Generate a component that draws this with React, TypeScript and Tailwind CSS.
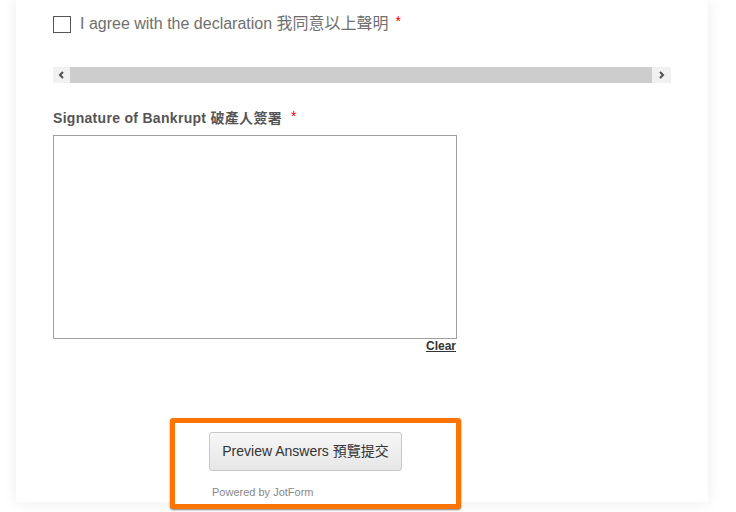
export default function App() {
  return (
    <div className="min-h-screen bg-white" style={{ fontFamily: '"Liberation Sans", Arial, "Noto Sans CJK TC", sans-serif' }}>
      <div className="mx-[16px] w-[692px] h-[502px] bg-white shadow-[0_0_14px_rgba(0,0,0,0.08)]">
        <div className="pl-[37px] pr-[38px]">
          {/* declaration checkbox */}
          <div className="flex items-center pt-[15px] h-[33px]">
            <span className="w-[18px] h-[17px] border-[1.5px] border-[#555] bg-white shrink-0" />
            <span className="ml-[9px] text-[16px] text-[#6f6f6f]">
              I agree with the declaration 我同意以上聲明
            </span>
            <span className="ml-[7px] text-[14px] text-[#e00] -mt-[6px]">*</span>
          </div>

          {/* horizontal scrollbar */}
          <div className="mt-[34px] flex h-[16px] w-[618px] bg-[#f1f1f1]">
            <div className="w-[17px] flex items-center justify-center">
              <svg width="7" height="8" viewBox="0 0 7 8">
                <path d="M5 1 L2 4 L5 7" fill="none" stroke="#505050" strokeWidth="2" />
              </svg>
            </div>
            <div className="flex-1 bg-[#cdcdcd]" />
            <div className="w-[19px] flex items-center justify-center">
              <svg width="7" height="8" viewBox="0 0 7 8">
                <path d="M2 1 L5 4 L2 7" fill="none" stroke="#505050" strokeWidth="2" />
              </svg>
            </div>
          </div>

          {/* signature */}
          <div className="mt-[25px] flex items-center text-[14px] font-bold text-[#555] tracking-[0.3px]">
            <span>Signature of Bankrupt 破產人簽署</span>
            <span className="ml-[9px] text-[#e00] font-normal -mt-[4px]">*</span>
          </div>
          <div className="mt-[6px] w-[404px] h-[204px] border border-[#a0a0a0] bg-white" />
          <div className="w-[404px] flex justify-end">
            <span className="text-[12px] leading-[12px] font-bold underline text-[#333] mr-[1px] pt-[1px]">Clear</span>
          </div>

          {/* submit area */}
          <div className="mt-[66px] ml-[117px] w-[291px] h-[91px] border-[5px] border-[#ff7300] rounded-[3px] shadow-[0_1px_2px_rgba(0,0,0,0.5)] pl-[34px] pt-[9px] bg-white relative">
            <button className="w-[193px] h-[39px] rounded-[3px] border border-[#c8c8c8] bg-gradient-to-b from-[#f7f7f7] to-[#e6e6e6] text-[14px] text-[#333]">
              Preview Answers 預覽提交
            </button>
            <div className="mt-[15px] ml-[3px] text-[11px] leading-[13px] text-[#888]">Powered by JotForm</div>
          </div>
        </div>
      </div>
    </div>
  );
}
